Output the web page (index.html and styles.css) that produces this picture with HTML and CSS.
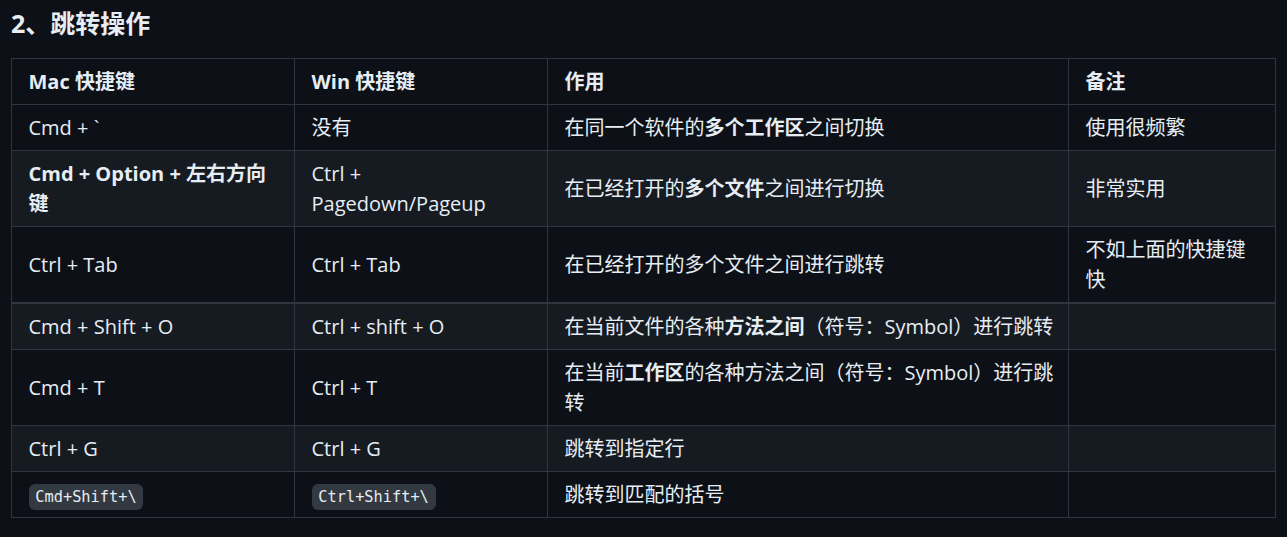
FILE: index.html
```html
<!DOCTYPE html>
<html lang="zh-CN">
<head>
<meta charset="utf-8">
<title>跳转操作</title>
<link rel="stylesheet" href="styles.css">
</head>
<body>
<div class="markdown">
  <h3 class="title">2、跳转操作</h3>
  <table class="keys">
    <colgroup>
      <col class="c1"><col class="c2"><col class="c3"><col class="c4">
    </colgroup>
    <thead>
      <tr><th>Mac 快捷键</th><th>Win 快捷键</th><th class="desc">作用</th><th>备注</th></tr>
    </thead>
    <tbody>
      <tr><td>Cmd + `</td><td>没有</td><td class="desc">在同一个软件的<strong>多个工作区</strong>之间切换</td><td>使用很频繁</td></tr>
      <tr><td><strong>Cmd + Option + 左右方向键</strong></td><td>Ctrl + Pagedown/Pageup</td><td class="desc">在已经打开的<strong>多个文件</strong>之间进行切换</td><td>非常实用</td></tr>
      <tr><td>Ctrl + Tab</td><td>Ctrl + Tab</td><td class="desc">在已经打开的多个文件之间进行跳转</td><td>不如上面的快捷键快</td></tr>
      <tr class="sep"><td>Cmd + Shift + O</td><td>Ctrl + shift + O</td><td class="desc">在当前文件的各种<strong>方法之间</strong>（符号：Symbol）进行跳转</td><td></td></tr>
      <tr><td>Cmd + T</td><td>Ctrl + T</td><td class="desc">在当前<strong>工作区</strong>的各种方法之间（符号：Symbol）进行跳转</td><td></td></tr>
      <tr><td>Ctrl + G</td><td>Ctrl + G</td><td class="desc">跳转到指定行</td><td></td></tr>
      <tr><td><code>Cmd+Shift+\</code></td><td><code>Ctrl+Shift+\</code></td><td class="desc">跳转到匹配的括号</td><td></td></tr>
    </tbody>
  </table>
</div>
</body>
</html>
```
FILE: styles.css
```css
html, body {
  margin: 0;
  background: #0d1117;
}
body {
  color: #e6edf3;
  font-family: "Open Sans", "Noto Sans CJK SC", sans-serif;
  font-size: 20px;
  line-height: 1.5;
}
.markdown {
  padding: 0 12px 0 11px;
}
.title {
  margin: 8px 0 19px;
  font-size: 25px;
  line-height: 1.25;
  font-weight: 700;
  color: #e6edf3;
}
.keys {
  border-collapse: collapse;
  border-spacing: 0;
  width: 1264px;
  table-layout: fixed;
}
.c1 { width: 283px; }
.c2 { width: 253px; }
.c3 { width: 521px; }
.c4 { width: 207px; }
.keys th,
.keys td {
  border: 1px solid #30363d;
  padding: 7.5px 16.5px;
  text-align: left;
  vertical-align: middle;
}
.keys .desc {
  padding-right: 6px;
}
.keys th {
  font-weight: 700;
}
.keys tr {
  background: #0d1117;
  border-top: 1px solid #21262d;
}
.keys tbody tr:nth-child(2n) {
  background: #161b22;
}
.keys tr.sep {
  border-top: 2px solid #30363d;
}
.keys strong {
  font-weight: 700;
}
.keys code {
  font-family: "DejaVu Sans Mono", "Liberation Mono", monospace;
  font-size: 15.3px;
  background: rgba(110, 118, 129, 0.4);
  border-radius: 6px;
  padding: 4px 6.8px;
  white-space: nowrap;
}
```
